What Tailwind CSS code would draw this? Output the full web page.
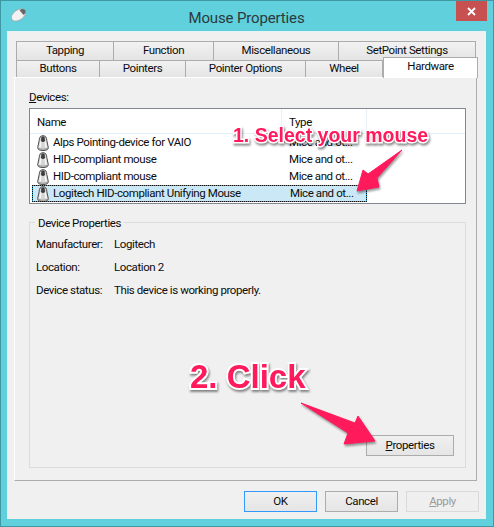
<!DOCTYPE html>
<html lang="en">
  <head>
    <meta charset="UTF-8" />
    <title>Mouse Properties</title>
    <script src="https://cdn.jsdelivr.net/npm/@tailwindcss/browser@4"></script>
  </head>
  <body class="bg-[#5fd0dc]">
    <svg class="absolute w-0 h-0">
      <defs>
        <!-- device icon, reused by every row -->
        <symbol id="dev" viewBox="0 0 16 16">
          <path d="M8 .7 C5.2 .7 4.3 2.6 4.2 5.5 L2.7 12.5 C2.5 14.8 5 15.5 8 15.5 C11 15.5 13.5 14.8 13.3 12.5 L11.8 5.5 C11.7 2.6 10.8 .7 8 .7 Z" fill="#d4d4d4" stroke="#4d4d4d" />
          <path d="M5.3 6 L4 12.5 L6 12.5 L6.5 6 Z M10.7 6 L12 12.5 L10 12.5 L9.5 6 Z" fill="#f6f6f6" />
          <path d="M6.4 2 C7 1.4 9 1.4 9.6 2 L10 6 C9 7.2 7 7.2 6 6 Z" fill="#3d3d3d" />
          <path d="M3.4 13 C5 14 11 14 12.6 13 L13 14.6 L3 14.6 Z" fill="#8a8a8a" />
        </symbol>
      </defs>
    </svg>
    <!-- window frame -->
    <div class="relative w-[494px] h-[527px] overflow-hidden bg-[#5fd0dc] border border-[#3e98a4] font-['Roboto','Liberation_Sans',sans-serif] text-[11.5px] text-[#0c0c0c] tracking-[-0.4px]">
      <!-- title bar -->
      <div class="flex h-[30px] items-start">
        <svg class="ml-[9px] mt-[6px] w-[18px] h-[16px]" viewBox="0 0 18 16">
          <ellipse cx="8.5" cy="8" rx="8" ry="5" transform="rotate(-35 8.5 8)" fill="#f2f2f2" stroke="#9a9a9a" stroke-width="0.6" />
          <path d="M9.5 3.2 L13.5 8 C15.5 6.5 16.3 4.5 15 3 C13.5 1.6 11 2 9.5 3.2 Z" fill="#666" />
        </svg>
        <div class="flex-1 pl-[9px] pt-[6px] text-center text-[15px] tracking-[-0.15px] text-[#2c3a3c]">Mouse Properties</div>
        <div class="mr-[6px] w-[31px] h-[20px] bg-[#c75050] flex items-center justify-center">
          <svg class="w-[9px] h-[9px]" viewBox="0 0 9 9"><path d="M1 1 L8 8 M8 1 L1 8" stroke="#fff" stroke-width="1.8" /></svg>
        </div>
      </div>

      <!-- client area -->
      <div class="relative mx-[6px] w-[479px] h-[488px] bg-[#f0f0f0] border-l border-t border-[#e6f3f4] pl-[7px] pt-[9px]">
        <!-- tabs -->
        <div class="flex h-[19px] ml-[1px] w-[460px] leading-[17px]">
          <div class="w-[98px] text-center bg-gradient-to-b from-[#f2f2f2] to-[#e4e4e4] border border-[#acacac] border-b-0">Tapping</div>
          <div class="w-[100px] text-center bg-gradient-to-b from-[#f2f2f2] to-[#e4e4e4] border border-l-0 border-[#acacac] border-b-0">Function</div>
          <div class="w-[125px] text-center bg-gradient-to-b from-[#f2f2f2] to-[#e4e4e4] border border-l-0 border-[#acacac] border-b-0">Miscellaneous</div>
          <div class="w-[137px] text-center bg-gradient-to-b from-[#f2f2f2] to-[#e4e4e4] border border-l-0 border-[#acacac] border-b-0">SetPoint Settings</div>
        </div>
        <div class="flex h-[17px] ml-[1px] leading-[15px]">
          <div class="w-[84px] text-center bg-gradient-to-b from-[#f2f2f2] to-[#e4e4e4] border border-[#acacac] border-b-0">Buttons</div>
          <div class="w-[86px] text-center bg-gradient-to-b from-[#f2f2f2] to-[#e4e4e4] border border-l-0 border-[#acacac] border-b-0">Pointers</div>
          <div class="w-[120px] text-center bg-gradient-to-b from-[#f2f2f2] to-[#e4e4e4] border border-l-0 border-[#acacac] border-b-0">Pointer Options</div>
          <div class="w-[77px] text-center bg-gradient-to-b from-[#f2f2f2] to-[#e4e4e4] border border-l-0 border-[#acacac] border-b-0">Wheel</div>
        </div>
        <!-- selected tab sits over the row edges -->
        <div class="absolute left-[375px] top-[25px] w-[95px] h-[21px] z-10 bg-white border border-b-0 border-[#acacac] text-center leading-[16px]">Hardware</div>

        <!-- tab panel -->
        <div class="w-[463px] h-[404px] -ml-[1px] bg-[#f0f0f0] border border-t-white border-l-white border-b-[#acacac] border-r-[#acacac] pl-[14px] pr-[10px]">
          <div class="h-[30px] pt-[11px] leading-[16px]"><span class="underline">D</span>evices:</div>

          <!-- device list -->
          <div class="h-[96px] w-[437px] bg-white border border-[#828790]">
            <div class="flex h-[25px] border-b border-[#e3effb]">
              <div class="w-[252px] pl-[7px] pt-[5px] border-r border-[#e9f0f8]">Name</div>
              <div class="w-[85px] pl-[7px] pt-[5px] border-r border-[#e9f0f8]">Type</div>
            </div>
            <div class="flex h-[17px] items-center"><div class="w-[252px] flex items-center pl-[5px] gap-[2px]"><svg class="w-[16px] h-[16px]"><use href="#dev" /></svg><span class="whitespace-nowrap">Alps Pointing-device for VAIO</span></div><div class="w-[85px] pl-[7px] whitespace-nowrap">Mice and ot...</div></div>
            <div class="flex h-[17px] items-center"><div class="w-[252px] flex items-center pl-[5px] gap-[2px]"><svg class="w-[16px] h-[16px]"><use href="#dev" /></svg><span class="whitespace-nowrap">HID-compliant mouse</span></div><div class="w-[85px] pl-[7px] whitespace-nowrap">Mice and ot...</div></div>
            <div class="flex h-[17px] items-center"><div class="w-[252px] flex items-center pl-[5px] gap-[2px]"><svg class="w-[16px] h-[16px]"><use href="#dev" /></svg><span class="whitespace-nowrap">HID-compliant mouse</span></div><div class="w-[85px] pl-[7px] whitespace-nowrap">Mice and ot...</div></div>
            <div class="flex h-[17px] w-[335px] ml-[2px] items-center bg-[#cbe8f6] border border-[#26a0da] outline-1 outline-dotted outline-[#111] -outline-offset-1"><div class="w-[250px] flex items-center pl-[2px] gap-[2px]"><svg class="w-[16px] h-[16px]"><use href="#dev" /></svg><span class="whitespace-nowrap">Logitech HID-compliant Unifying Mouse</span></div><div class="w-[83px] pl-[7px] whitespace-nowrap">Mice and ot...</div></div>
          </div>

          <!-- device properties group -->
          <div class="relative mt-[18px] w-[437px] h-[246px] border border-[#dcdcdc] pl-[6px] pt-[10px]">
            <div class="absolute left-[5px] -top-[8px] bg-[#f0f0f0] px-[3px] leading-[16px]">Device Properties</div>
            <div class="flex h-[23px] items-center"><div class="w-[78px]">Manufacturer:</div><div>Logitech</div></div>
            <div class="flex h-[23px] items-center"><div class="w-[78px]">Location:</div><div>Location 2</div></div>
            <div class="flex h-[23px] items-center"><div class="w-[78px]">Device status:</div><div>This device is working properly.</div></div>
            <div class="absolute right-[11px] bottom-[11px] w-[88px] h-[21px] flex items-center justify-center bg-gradient-to-b from-[#f0f0f0] to-[#e5e5e5] border border-[#acacac]"><span><span class="underline">P</span>roperties</span></div>
          </div>
        </div>

        <!-- dialog buttons -->
        <div class="flex justify-end gap-[8px] mt-[10px] pr-[7px]">
          <div class="w-[73px] h-[21px] flex items-center justify-center bg-gradient-to-b from-[#f0f0f0] to-[#e5e5e5] border border-[#3399ff]">OK</div>
          <div class="w-[73px] h-[21px] flex items-center justify-center bg-gradient-to-b from-[#f0f0f0] to-[#e5e5e5] border border-[#acacac]">Cancel</div>
          <div class="w-[73px] h-[21px] flex items-center justify-center bg-[#efefef] border border-[#d9d9d9] text-[#9a9a9a]"><span><span class="underline">A</span>pply</span></div>
        </div>
      </div>

      <!-- annotations drawn over the dialog -->
      <svg class="absolute -left-[1px] -top-[1px] w-[494px] h-[527px] z-20 pointer-events-none drop-shadow-[1px_2px_1px_rgba(0,0,0,0.4)]" viewBox="0 0 494 527">
        <path d="M402 150 L377 178 L379 187 L357 191 L363 170 L368 174 Z" fill="#ff1a5c" stroke="#ff1a5c" stroke-linejoin="round" />
        <path d="M301 403 L355 423 L358 416 L375 441 L344 444 L348 433 Z" fill="#ff1a5c" stroke="#ff1a5c" stroke-linejoin="round" />
      </svg>
      <div class="absolute left-[232px] top-[120px] z-30 whitespace-nowrap font-['Liberation_Sans',sans-serif] font-bold text-[19.5px] leading-[28px] tracking-normal text-[#ff1a5c] [paint-order:stroke_fill] [-webkit-text-stroke:3px_white] drop-shadow-[1px_2px_1px_rgba(0,0,0,0.45)]">1. Select your mouse</div>
      <div class="absolute left-[189px] top-[356px] z-30 whitespace-nowrap font-['Liberation_Sans',sans-serif] font-bold text-[33px] leading-[40px] tracking-normal text-[#ff1a5c] [paint-order:stroke_fill] [-webkit-text-stroke:4px_white] drop-shadow-[1px_2px_1px_rgba(0,0,0,0.45)]">2. Click</div>
    </div>
  </body>
</html>
